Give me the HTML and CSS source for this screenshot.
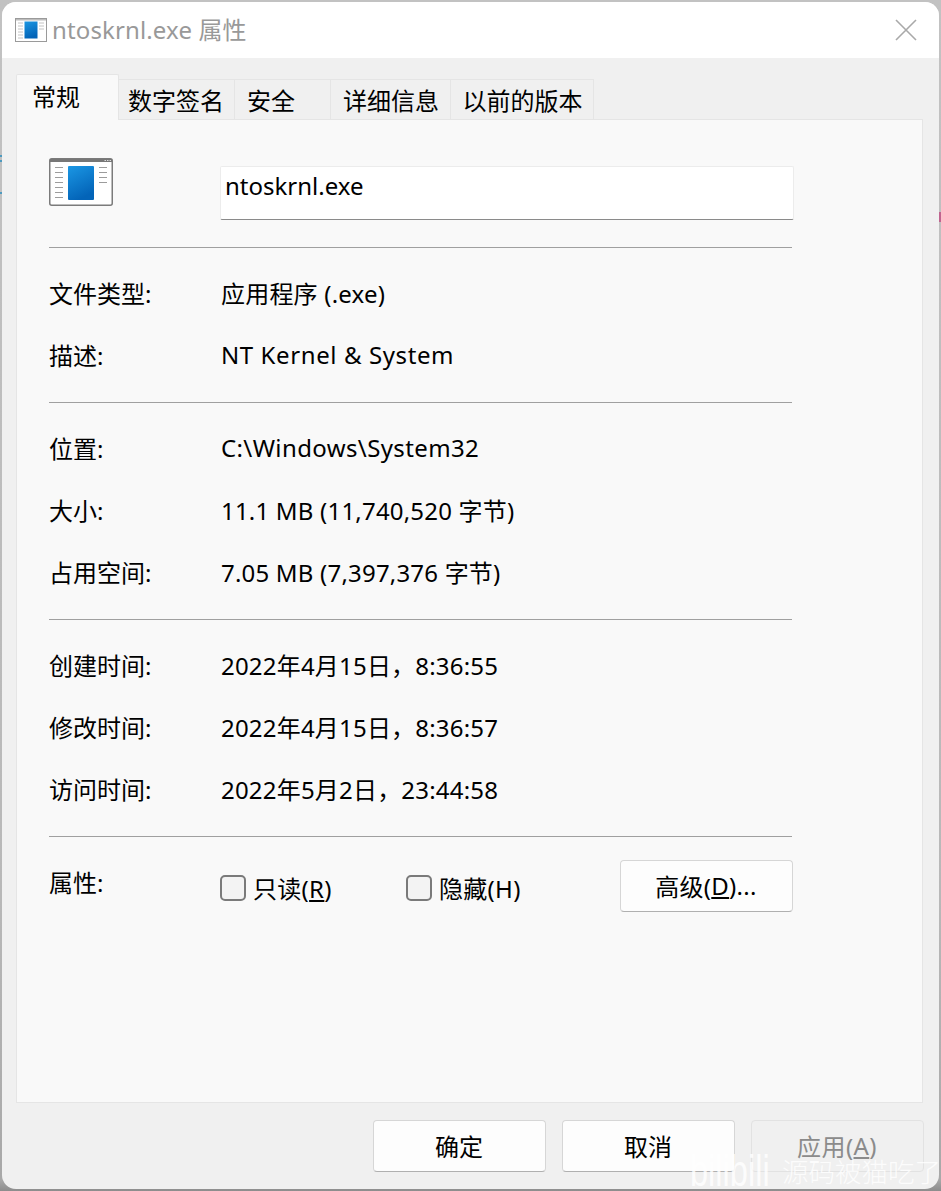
FILE: index.html
```html
<!DOCTYPE html>
<html lang="zh">
<head>
<meta charset="utf-8">
<title>ntoskrnl.exe 属性</title>
<link rel="stylesheet" href="styles.css">
</head>
<body>
<span class="mark m1"></span><span class="mark m2"></span><span class="mark m3"></span><span class="mark m4"></span>
<div class="window">
  <header class="titlebar">
    <svg class="title-icon" width="32" height="24" viewBox="0 0 32 24">
      <rect x="0.5" y="0.5" width="31" height="23" fill="#fff" stroke="#9a9a9a"/>
      <rect x="1" y="1" width="30" height="1.5" fill="#bdbdbd"/>
      <path d="M3 5h5M3 8h5M3 11h5M3 14h5M3 17h5M3 20h5M24 5h5M24 8h5M24 11h5" stroke="#c4c4c4" fill="none"/>
      <rect x="9.500" y="3.500" width="13" height="17" fill="url(#g1)"/>
      <defs><linearGradient id="g1" x1="0" y1="0" x2="0.3" y2="1"><stop offset="0" stop-color="#1a96e2"/><stop offset="1" stop-color="#0364b8"/></linearGradient></defs>
    </svg>
    <span class="title-text">ntoskrnl.exe 属性</span>
    <svg class="close" width="22" height="22" viewBox="0 0 22 22"><path d="M1 1L21 21M21 1L1 21" stroke="#a9a9a9" stroke-width="1.6" fill="none"/></svg>
  </header>
  <main class="body">
    <nav class="tabs">
      <div class="tab active">常规</div>
      <div class="tab t2">数字签名</div>
      <div class="tab t3">安全</div>
      <div class="tab t4">详细信息</div>
      <div class="tab t5">以前的版本</div>
    </nav>
    <section class="panel">
      <div class="name-row">
        <svg class="file-icon" width="64" height="48" viewBox="0 0 64 48">
          <rect x="0.750" y="0.750" width="62.500" height="46.500" rx="2" fill="#fff" stroke="#7b7b7b" stroke-width="1.500"/>
          <rect x="1" y="1" width="62" height="3" fill="#777"/>
          <path d="M55.500 2.500h1.500M58 2.500h1.500M60.500 2.500h1.500" stroke="#ddd" fill="none"/>
          <path d="M6 9.500h8M6 14.500h8M6 19.500h8M6 24.500h8M6 29.500h8M6 34.500h8M6 39.500h8M50 9.500h8M50 14.500h8M50 19.500h8M50 24.500h8" stroke="#9c9c9c" fill="none"/>
          <rect x="19" y="8" width="26" height="34" rx="1" fill="url(#g2)"/>
          <defs><linearGradient id="g2" x1="0" y1="0" x2="0.4" y2="1"><stop offset="0" stop-color="#1b97e4"/><stop offset="1" stop-color="#0364b8"/></linearGradient></defs>
        </svg>
        <div class="name-box">ntoskrnl.exe</div>
      </div>
      <hr class="sep first">
      <div class="group">
        <div class="row"><span class="k">文件类型:</span><span class="v">应用程序 (.exe)</span></div>
        <div class="row"><span class="k">描述:</span><span class="v v-wide">NT Kernel &amp; System</span></div>
      </div>
      <hr class="sep">
      <div class="group">
        <div class="row"><span class="k">位置:</span><span class="v v-mid">C:\Windows\System32</span></div>
        <div class="row"><span class="k">大小:</span><span class="v">11.1 MB (11,740,520 字节)</span></div>
        <div class="row"><span class="k">占用空间:</span><span class="v">7.05 MB (7,397,376 字节)</span></div>
      </div>
      <hr class="sep">
      <div class="group">
        <div class="row"><span class="k">创建时间:</span><span class="v">2022年4月15日，8:36:55</span></div>
        <div class="row"><span class="k">修改时间:</span><span class="v">2022年4月15日，8:36:57</span></div>
        <div class="row"><span class="k">访问时间:</span><span class="v">2022年5月2日，23:44:58</span></div>
      </div>
      <hr class="sep">
      <div class="attrs">
        <span class="k attr-k">属性:</span>
        <label class="check c1"><span class="box"></span><span>只读(<u>R</u>)</span></label>
        <label class="check c2"><span class="box"></span><span>隐藏(H)</span></label>
        <div class="btn adv">高级(<u>D</u>)...</div>
      </div>
    </section>
    <footer class="footer">
      <div class="btn">确定</div>
      <div class="btn">取消</div>
      <div class="btn disabled">应用(<u>A</u>)</div>
    </footer>
  </main>
</div>
<div class="watermark"><span class="wm-logo">bilibili</span><span class="wm-text">源码被猫吃了</span></div>
</body>
</html>
```
FILE: styles.css
```css
* { box-sizing: border-box; }
html, body { margin: 0; padding: 0; }
body {
  width: 941px; height: 1191px; overflow: hidden; position: relative;
  background: linear-gradient(#c2c2c2 0, #b8b8b8 900px, #a8a8a8 1180px, #8c8c8c 1191px);
  font-family: "Noto Sans", "Noto Sans CJK SC", sans-serif;
  font-size: 24px; color: #000;
}
.mark { position: absolute; width: 2px; height: 2px; background: #4d9abf; left: 0; }
.m1 { top: 155px; } .m2 { top: 160px; } .m3 { top: 192px; }
.m4 { left: 939px; top: 212px; height: 10px; background: #c0648f; }
.window {
  position: absolute; left: 2px; top: 2px; width: 937px; height: 1187px;
  border-radius: 14px; overflow: hidden; background: #f0f0f0;
  display: flex; flex-direction: column;
}
.titlebar {
  height: 56px; background: #fff; display: flex; align-items: center;
  padding: 0 22px 0 13px; flex: none;
}
.title-icon { flex: none; margin-right: 5px; }
.title-text { color: #999; line-height: 56px; white-space: nowrap; letter-spacing: .13px; }
.close { margin-left: auto; }
.body { flex: 1; padding: 16px 14px 0; display: flex; flex-direction: column; }
.tabs { display: flex; align-items: flex-end; height: 46px; position: relative; z-index: 1; margin-bottom: -1px; }
.tab {
  height: 41px; background: #f0f0f0; border: 1px solid #e5e5e5; border-left: 0;
  display: flex; align-items: center; justify-content: center; line-height: 1; padding-top: 2px;
}
.tab.active { width: 103px; height: 46px; background: #f9f9f9; border: 1px solid #e5e5e5; border-bottom: 0; padding: 0 0 2px 15px; justify-content: flex-start; border-radius: 2px 2px 0 0; }
.t2 { width: 116px; padding-right: 1px; } .t3 { width: 96px; justify-content: flex-start; padding-left: 12px; } .t4 { width: 120px; padding-left: 1px; } .t5 { width: 143px; padding-left: 1px; }
.panel {
  width: 907px; height: 984px; background: #f9f9f9; border: 1px solid #e5e5e5;
  padding: 0 0 0 32px; flex: none;
}
.name-row { display: flex; height: 100px; padding-top: 38px; }
.file-icon { flex: none; margin-right: 107px; }
.name-box {
  width: 574px; height: 54px; margin-top: 8px; background: #fff;
  border: 1px solid #ececec; border-bottom: 1px solid #8a8a8a;
  padding: 2px 0 0 4px; line-height: 33px; border-radius: 2px;
}
.sep { margin: 0; border: 0; height: 1px; background: #a0a0a0; width: 743px; }
.sep.first { margin-top: 27px; }
.group { padding: 13px 0 17px; }
.row { display: flex; height: 62px; align-items: center; }
.k { width: 172px; flex: none; }
.v { letter-spacing: .2px; }
.v-wide { letter-spacing: .6px; }
.v-mid { letter-spacing: .38px; }
.attrs { display: flex; align-items: flex-start; padding-top: 23px; height: 80px; position: relative; }
.attr-k { line-height: 45px; }
.check { display: flex; align-items: center; height: 55px; flex: none; letter-spacing: .3px; }
.c1 { width: 186px; margin-left: -1px; } .c2 { width: 214px; }
.box { width: 26px; height: 26px; border: 2px solid #7a7a7a; border-radius: 5px; background: #f3f3f3; margin-right: 7px; flex: none; }
.btn {
  width: 173px; height: 52px; background: #fdfdfd; border: 1px solid #d6d6d6; border-bottom-color: #b0b0b0;
  border-radius: 4px; display: flex; align-items: center; justify-content: center; white-space: pre;
  padding: 0 1px 2px 0;
}
.adv { flex: none; letter-spacing: .3px; }
.footer { display: flex; justify-content: flex-end; gap: 16px; padding: 17px 0 0; width: 908px; }
.btn.disabled { background: #f0f0f0; border-color: #e2e2e2; color: #8b8b8b; letter-spacing: .4px; }
.watermark {
  position: absolute; left: 690px; top: 1150px; display: flex; align-items: center;
  color: rgba(255,255,255,.82); white-space: nowrap; height: 41px;
}
.wm-logo { font-family: "Liberation Sans", sans-serif; font-size: 44px; line-height: 41px; width: 92px; transform: scaleX(.74); transform-origin: left center; }
.wm-text { font-size: 26.5px; line-height: 41px; font-family: "Noto Sans CJK SC", sans-serif; font-weight: 300; }
```
